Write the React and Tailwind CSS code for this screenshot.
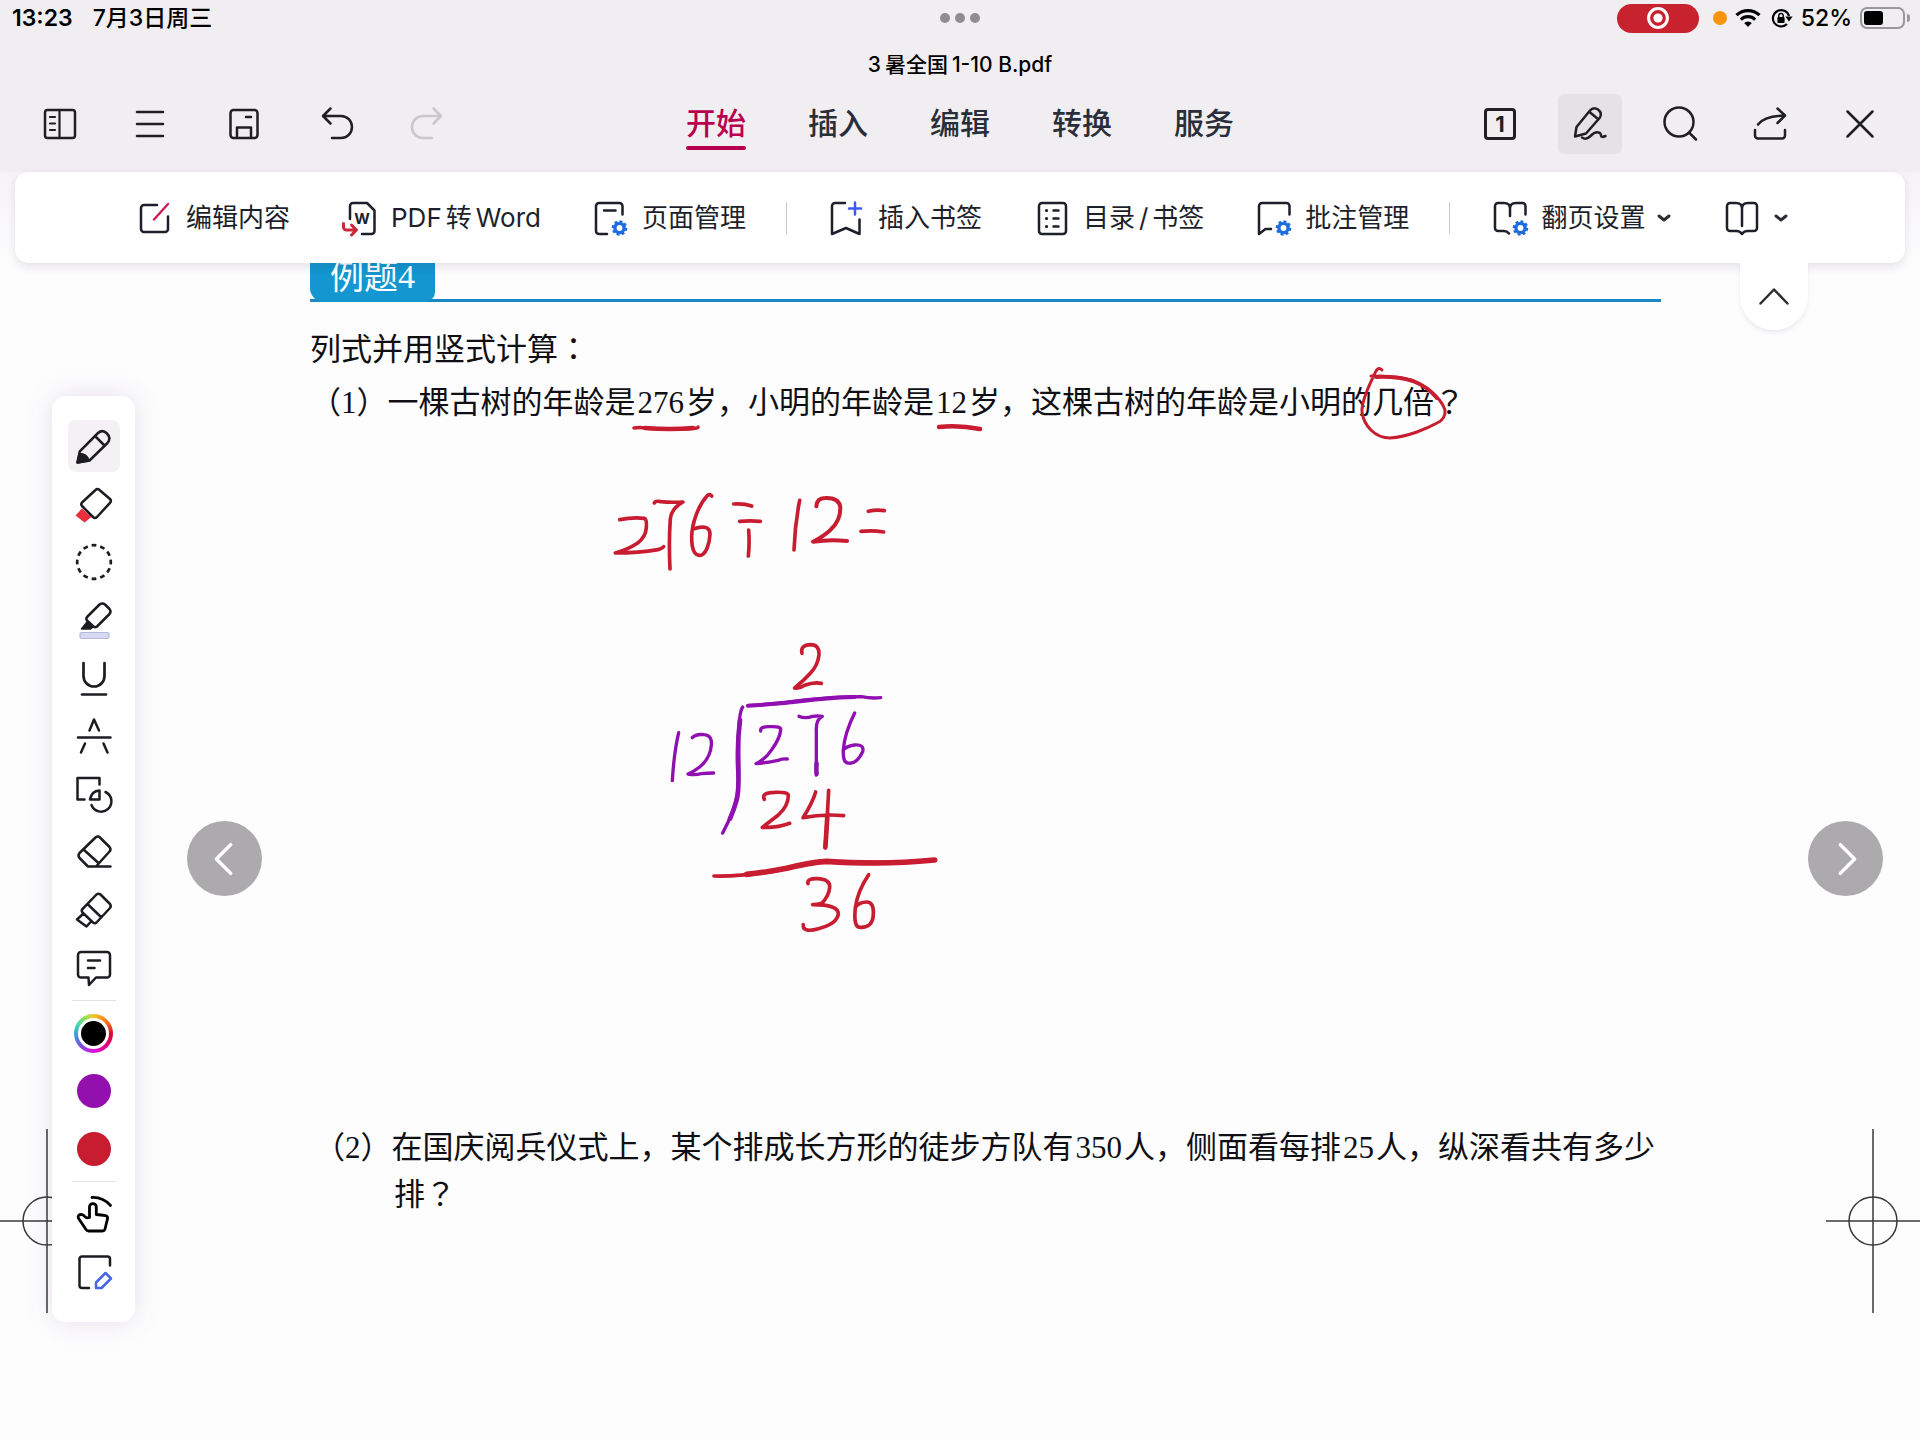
import { useState } from 'react';
import clsx from 'clsx';

const TABS = ['开始', '插入', '编辑', '转换', '服务'];

const INK_RED = '#c81c30';
const INK_PURPLE = '#8f0fb0';

function Icon({ children, className = 'size-10', strokeWidth = 2.5 }) {
  return (
    <svg
      viewBox="0 0 40 40"
      className={clsx('shrink-0', className)}
      fill="none"
      stroke="currentColor"
      strokeWidth={strokeWidth}
      strokeLinecap="round"
      strokeLinejoin="round"
      aria-hidden="true"
    >
      {children}
    </svg>
  );
}

function Gear({ cx, cy }) {
  return (
    <g stroke="#1f6be0" strokeLinecap="butt">
      <circle cx={cx} cy={cy} r="4.6" strokeWidth="3.4" />
      <circle cx={cx} cy={cy} r="6.6" strokeWidth="2.4" pathLength="16" strokeDasharray="1.1 0.9" />
    </g>
  );
}

function Chevron() {
  return (
    <svg viewBox="0 0 16 10" className="h-2.5 w-4 shrink-0" fill="none" stroke="#2c2c34" strokeWidth="3" strokeLinecap="round" strokeLinejoin="round" aria-hidden="true">
      <path d="M3 3l5 4 5-4" />
    </svg>
  );
}

// Mixed Latin and Chinese text, with a little air where the scripts meet
function MixedText({ parts }) {
  return (
    <span className="flex gap-1">
      {parts.map((part) => (
        <span key={part}>{part}</span>
      ))}
    </span>
  );
}

function StatusBar() {
  return (
    <div className="grid h-9 grid-cols-[1fr_auto_1fr] items-center text-[23px] leading-none font-semibold text-black">
      <div className="flex gap-5 pl-3">
        <span>13:23</span>
        <span className="font-medium">7月3日周三</span>
      </div>
      <div className="flex gap-[5px]">
        <span className="size-2.5 rounded-full bg-[#8e8d91]" />
        <span className="size-2.5 rounded-full bg-[#8e8d91]" />
        <span className="size-2.5 rounded-full bg-[#8e8d91]" />
      </div>
      <div className="flex items-center justify-end pr-2.5">
        <span className="mr-3.5 flex h-[29px] w-[82px] items-center justify-center rounded-full bg-[#c9222f]">
          <svg viewBox="0 0 24 24" className="size-6" aria-hidden="true">
            <circle cx="12" cy="12" r="9.4" fill="none" stroke="#fff" strokeWidth="3" />
            <circle cx="12" cy="12" r="4.6" fill="#fff" />
          </svg>
        </span>
        <span className="mr-2 size-3.5 rounded-full bg-[#f8930a]" />
        <svg viewBox="0 0 26 20" className="mr-2.5 h-5 w-[26px]" fill="none" stroke="#000" strokeWidth="3.2" aria-hidden="true">
          <path d="M1.5 7.2a16.5 16.5 0 0 1 23 0" />
          <path d="M5.8 11.6a10.3 10.3 0 0 1 14.4 0" />
          <path d="M13 19l-3.8-4a5.4 5.4 0 0 1 7.6 0z" fill="#000" stroke="none" />
        </svg>
        <svg viewBox="0 0 22 20" className="mr-2 h-5 w-[22px]" aria-hidden="true">
          <path d="M16 16a8.2 8.2 0 1 1 2-8" fill="none" stroke="#000" strokeWidth="2.2" />
          <path d="M14.4 8.6h7.2l-3.6 5z" />
          <rect x="6.4" y="9" width="7.2" height="6" rx="1" />
          <path d="M7.8 9V7.6a2.2 2.2 0 0 1 4.4 0V9" fill="none" stroke="#000" strokeWidth="1.5" />
        </svg>
        <span className="mr-2 font-medium">52%</span>
        <span className="flex h-[22px] w-[45px] items-center rounded-[7px] border-2 border-[#98979b] pl-0.5">
          <span className="h-3.5 w-[19px] rounded-[3px] bg-black" />
        </span>
        <span className="ml-0.5 h-2 w-[3px] rounded-r-full bg-[#98979b]" />
      </div>
    </div>
  );
}

function ToolButton({ label, active, disabled, children }) {
  return (
    <button
      type="button"
      aria-label={label}
      disabled={disabled}
      className={clsx(
        'flex h-[60px] w-16 items-center justify-center rounded-md',
        active && 'bg-[#e4e2e5]',
        disabled ? 'text-[#c9c7ca]' : 'text-[#1f1f24]'
      )}
    >
      {children}
    </button>
  );
}

function MainToolbar({ tab, onTab }) {
  return (
    <div className="grid h-16 grid-cols-[1fr_auto_1fr] items-center">
      <div className="flex gap-7 pl-7">
        <ToolButton label="侧边栏">
          <Icon>
            <rect x="5" y="6" width="30" height="28" rx="2.5" />
            <path d="M19.5 6v28M10 13h5M10 19.5h5M10 26h5" strokeWidth="2.2" />
          </Icon>
        </ToolButton>
        <ToolButton label="菜单">
          <Icon>
            <path d="M5 8h26M5 20h26M5 32h26" />
          </Icon>
        </ToolButton>
        <ToolButton label="保存">
          <Icon>
            <rect x="6.5" y="6" width="27" height="28" rx="3" />
            <path d="M22 13h5M13 33V23.5h14V33" />
          </Icon>
        </ToolButton>
        <ToolButton label="撤销">
          <Icon>
            <path d="M14.5 4.5L7 12l7.5 7.5M7.5 12H25a11 11 0 0 1 0 22h-9" />
          </Icon>
        </ToolButton>
        <ToolButton label="重做" disabled>
          <Icon>
            <path d="M25.5 4.5L33 12l-7.5 7.5M32.500 12H15a11 11 0 0 0 0 22h9" />
          </Icon>
        </ToolButton>
      </div>

      <nav className="flex gap-[62px]">
        {TABS.map((name) => (
          <button
            key={name}
            type="button"
            onClick={() => onTab(name)}
            className={clsx(
              'relative h-16 pb-0.5 text-[30px] leading-none font-medium',
              tab === name ? 'text-[#b8004e]' : 'text-[#2a2e3a]'
            )}
          >
            {name}
            {tab === name && <span className="absolute inset-x-0 bottom-1.5 h-1 rounded-full bg-[#b8004e]" />}
          </button>
        ))}
      </nav>

      <div className="flex justify-end gap-[26px] pr-7">
        <ToolButton label="标签页">
          <span className="flex size-8 items-center justify-center rounded-[4px] border-[3px] border-current text-[22px] leading-none font-bold">
            1
          </span>
        </ToolButton>
        <ToolButton label="批注" active>
          <Icon>
            <path d="M5 32.500l1.500-9.500L20 6.500q3.500-4 8-1 4.500 3.500 2 8L16 29.500zM19.500 8l8.500 7" />
            <path d="M12 33.500q4 3 8.500-1.500t8-3.500q2.500.5 2.500 3t4.500.5" />
          </Icon>
        </ToolButton>
        <ToolButton label="搜索">
          <Icon>
            <circle cx="19" cy="18" r="14.500" />
            <path d="M29.500 29l6.500 6.500" />
          </Icon>
        </ToolButton>
        <ToolButton label="分享">
          <Icon>
            <path d="M8 20.500Q14 12 34.500 11.500M27.500 4.500l7.500 7-7.500 7.500" />
            <path d="M5 26v5.500a3 3 0 0 0 3 3h24a3 3 0 0 0 3-3V26" />
          </Icon>
        </ToolButton>
        <ToolButton label="关闭">
          <Icon>
            <path d="M7.500 7.500l25 25M32.500 7.500l-25 25" />
          </Icon>
        </ToolButton>
      </div>
    </div>
  );
}

function RibbonItem({ icon, label, menu }) {
  return (
    <button
      type="button"
      aria-label={label ? undefined : '阅读模式'}
      className="flex shrink-0 items-center gap-[11px] text-[26px] leading-none whitespace-nowrap text-[#1d1f2b]"
    >
      <Icon>{icon}</Icon>
      {label && <span>{label}</span>}
      {menu && <Chevron />}
    </button>
  );
}

function RibbonDivider() {
  return <span className="-mx-2.5 h-8 w-px shrink-0 bg-[#c9c8cc]" />;
}

function Ribbon() {
  return (
    <div className="relative z-20 mx-[15px] flex h-[91px] items-center gap-[50px] rounded-[14px] bg-white pl-[120px] shadow-[0_4px_10px_rgba(40,30,60,0.12)]">
      <RibbonItem
        label="编辑内容"
        icon={
          <>
            <path d="M22 7H9a3 3 0 0 0-3 3v21a3 3 0 0 0 3 3h21a3 3 0 0 0 3-3V18.500" />
            <path d="M33 6L19 21.500" stroke="#d0205c" />
          </>
        }
      />
      <RibbonItem
        label={<MixedText parts={['PDF', '转', 'Word']} />}
        icon={
          <>
            <path d="M10 21V8a3 3 0 0 1 3-3h14l7.500 7.500V33a3 3 0 0 1-3 3H22" />
            <text x="22" y="25.500" fontSize="15" fontWeight="700" textAnchor="middle" fill="currentColor" stroke="none">
              W
            </text>
            <path d="M3.500 25.500V29a3 3 0 0 0 3 3H16M11.500 27l5 5-5 5" stroke="#c8283a" strokeWidth="3" />
          </>
        }
      />
      <RibbonItem
        label="页面管理"
        icon={
          <>
            <path d="M16 36H8a3 3 0 0 1-3-3V8a3 3 0 0 1 3-3h20.500a3 3 0 0 1 3 3v8.500M13 12.500h11.500" />
            <Gear cx={28.500} cy={30} />
          </>
        }
      />
      <RibbonDivider />
      <RibbonItem
        label="插入书签"
        icon={
          <>
            <path d="M18 5H8a3 3 0 0 0-3 3v28l14-6 13.500 6V21.500" />
            <path d="M28 4.500v12M22 10.500h12" stroke="#3b5bf5" />
          </>
        }
      />
      <RibbonItem
        label={<MixedText parts={['目录', '/', '书签']} />}
        icon={
          <>
            <rect x="7" y="5" width="27" height="31" rx="3" />
            <path d="M14.500 12.500h.1M14.500 20.500h.1M14.500 28.500h.1" strokeWidth="3.200" />
            <path d="M21.500 12.500h5M21.500 20.500h5M21.500 28.500h5" />
          </>
        }
      />
      <RibbonItem
        label="批注管理"
        icon={
          <>
            <path d="M17 31h-5.500L5 36V8a3 3 0 0 1 3-3h24.500a3 3 0 0 1 3 3v8.500" />
            <Gear cx={29.500} cy={30} />
          </>
        }
      />
      <RibbonDivider />
      <RibbonItem
        label="翻页设置"
        menu
        icon={
          <>
            <path d="M19 35.500q-2-2.500-5-2.500H8a3 3 0 0 1-3-3V8a3 3 0 0 1 3-3h6q6 0 6 5.500V18M20 10.500Q20 5 26 5h6.500a3 3 0 0 1 3 3v8.500" />
            <Gear cx={30.500} cy={30} />
          </>
        }
      />
      <RibbonItem
        menu
        icon={
          <path d="M20 28V10.500Q20 5 14 5H8a3 3 0 0 0-3 3v22a3 3 0 0 0 3 3h6.500q3.500 0 5.500 3 2-3 5.500-3H32a3 3 0 0 0 3-3V8a3 3 0 0 0-3-3h-6q-6 0-6 5.500" />
        }
      />
      <button
        type="button"
        aria-label="收起工具栏"
        className="absolute top-full right-[97px] flex h-[67px] w-[68px] items-center justify-center rounded-b-full bg-white text-[#2c2c34] shadow-[0_3px_4px_rgba(40,30,60,0.08)]"
      >
        <Icon>
          <path d="M6.500 26.500L20 12.500l13.500 14" />
        </Icon>
      </button>
    </div>
  );
}

const PEN_TOOLS = [
  {
    label: '铅笔',
    icon: (
      <>
        <path d="M3.500 36.500l2.300-11.200L24 7q4.500-4 9 .5t.5 9.500L15.500 34.500zM21.500 10.500l8.500 8.500" />
        <path d="M3.500 36.500l2-8.500q7 0 9 6.500z" fill="currentColor" />
      </>
    ),
  },
  {
    label: '马克笔',
    icon: (
      <>
        <path d="M8 24.500L1.500 31.500l9 7 7-5.500z" fill="#e8303c" stroke="none" />
        <path d="M21.500 6q2-2 4 0L36 15q1.800 1.800 0 3.800L23 33q-2 2-4 0L8 22q-1.500-1.700 0-3.500z" fill="#fff" />
      </>
    ),
  },
  {
    label: '套索',
    icon: <circle cx="20" cy="20" r="16.800" strokeWidth="2.700" strokeLinecap="butt" pathLength="120" strokeDasharray="5.500 4.500" strokeDashoffset="2.750" />,
  },
  {
    label: '荧光笔',
    icon: (
      <>
        <path d="M25.500 4.500q3-2 5.500 0l4.500 4.500q2 2.500 0 5L23 26.500q-2 1.500-3.500 0L13 20.500q-1.300-1.800 0-3.500z" />
        <path d="M7.500 29l5.500-7 6 5-2.500 2z" fill="currentColor" strokeWidth="1.500" />
        <rect x="6" y="32.500" width="29" height="6" rx="1.500" fill="#d6d9f2" stroke="#b5b9dc" strokeWidth="1.200" />
      </>
    ),
  },
  { label: '下划线', icon: <path d="M9.500 5v13a10.500 10.500 0 0 0 21 0V5M8 36.500h24" strokeWidth="2.700" /> },
  { label: '删除线', icon: <path d="M15.500 14.500l4.500-11 5 11M4 21.500h32.500M11 27.500l-4 9M29.500 27.500l4 9" /> },
  {
    label: '形状',
    icon: (
      <>
        <path d="M10.500 25.500H3.500V4h22v6.500" />
        <path d="M31.500 18A10.300 10.300 0 1 1 17.500 31M16 25.500h9.500V16.500q-8 .5-9.500 9z" />
      </>
    ),
  },
  { label: '橡皮擦', icon: <path d="M14 34.500L5.500 26q-2-2.500 0-5L21.500 5.500q2.500-2 4.500 0L35.500 15q2 2.500 0 4.500L22 34.500M9.500 17.500l15.500 14M14 34.500h22.500" /> },
  { label: '记号笔', icon: <path d="M22.500 4.500q2-1.500 4 0l9.500 9.500q1.500 2 0 4L22.500 32.500q-1.500 1.500-3.500 0L8.500 22.500q-1.500-2 0-3.500zM14 14.500l13.500 13M9.500 23.500l-6.500 6 9.500 7 5-5.500" /> },
  {
    label: '注释',
    icon: (
      <>
        <path d="M7 4h26a3 3 0 0 1 3 3v19.500a3 3 0 0 1-3 3H22L15 37l-.5-7.500H7a3 3 0 0 1-3-3V7a3 3 0 0 1 3-3z" />
        <path d="M14 12.500h12M14 20h6.500" />
      </>
    ),
  },
];

function PenPalette() {
  const [tool, setTool] = useState('铅笔');

  return (
    <aside className="absolute top-[133px] left-[52px] z-10 flex w-[83px] flex-col items-center rounded-[14px] bg-white py-6 text-[#1c1c22] shadow-[0_0_28px_rgba(60,40,90,0.14)]">
      <div className="flex flex-col gap-1.5">
        {PEN_TOOLS.map(({ label, icon }) => (
          <button
            key={label}
            type="button"
            aria-label={label}
            aria-pressed={tool === label}
            onClick={() => setTool(label)}
            className={clsx('flex size-[52px] items-center justify-center rounded-lg', tool === label && 'bg-[#f3f1f4]')}
          >
            <Icon>{icon}</Icon>
          </button>
        ))}
      </div>
      <span className="my-1.5 h-px w-11 bg-[#e2e1e4]" />
      <div className="flex flex-col gap-1.5">
        <button type="button" aria-label="自定义颜色" className="flex size-[52px] items-center justify-center">
          <span className="flex size-[39px] items-center justify-center rounded-full bg-[conic-gradient(#f5c62a,#f56a1e_55deg,#d9082c_90deg,#e8007a_130deg,#e010e0_180deg,#7a50d8_225deg,#3f9ad8_265deg,#3fdcb0_300deg,#a8e040_340deg,#f5c62a)]">
            <span className="size-[31px] rounded-full border-[3px] border-white bg-black" />
          </span>
        </button>
        <button type="button" aria-label="紫色" className="flex size-[52px] items-center justify-center">
          <span className="size-[34px] rounded-full bg-[#9410ae]" />
        </button>
        <button type="button" aria-label="红色" className="flex size-[52px] items-center justify-center">
          <span className="size-[34px] rounded-full bg-[#c81c30]" />
        </button>
      </div>
      <span className="my-1.5 h-px w-11 bg-[#e2e1e4]" />
      <div className="flex flex-col gap-1.5">
        <button type="button" aria-label="手指书写" className="flex size-[52px] items-center justify-center text-black">
          <Icon strokeWidth={2.8}>
            <path d="M18 3.500Q29 3 36.500 11.500" />
            <path d="M15.500 23.500V13a3.400 3.400 0 0 1 6.800 0v7.500l9 1q2.500.5 2.300 3L31 35q-.5 2-2.500 2H14.500q-1.500 0-2.500-1.500L4.300 24q-.8-3.500 3-3.500 2 0 3.500 2t4.700 1" />
          </Icon>
        </button>
        <button type="button" aria-label="编辑页面" className="flex size-[52px] items-center justify-center">
          <Icon>
            <path d="M15 36H8a2.500 2.500 0 0 1-2.500-2.500V7A2.500 2.500 0 0 1 8 4.500h25.500A2.500 2.500 0 0 1 36 7v6.500" />
            <path d="M22 36v-5.500l9.500-9.500 5.500 5.500-9.500 9.500z" stroke="#4565ea" />
          </Icon>
        </button>
      </div>
    </aside>
  );
}

function PageArrow({ label, className, d }) {
  return (
    <button type="button" aria-label={label} className={clsx('absolute top-[558px] z-10 flex size-[75px] items-center justify-center rounded-full bg-[#acaaad] text-white', className)}>
      <Icon className="size-[46px]" strokeWidth={3}>
        <path d={d} />
      </Icon>
    </button>
  );
}

function CropMark({ className }) {
  return (
    <svg viewBox="-47 -92 94 184" className={clsx('absolute top-[866px] h-[184px] w-[94px]', className)} fill="none" stroke="#3a3a3d" strokeWidth="1.5" aria-hidden="true">
      <path d="M0-92V92M-47 0H47" />
      <circle r="24" />
    </svg>
  );
}

// Pen strokes, in page coordinates. The worked sums are drawn at three times
// their size and scaled down, which keeps the curve points whole.
function Ink() {
  return (
    <svg
      viewBox="0 263 1920 1177"
      className="pointer-events-none absolute top-0 left-0 h-[1177px] w-[1920px] max-w-none"
      fill="none"
      strokeLinecap="round"
      strokeLinejoin="round"
      role="img"
      aria-label="手写演算 276÷12"
    >
      <g stroke={INK_RED} strokeWidth="3.500">
        <path d="M634 428q5-1 12 0t30 1 22-2" />
        <path d="M645 428q25 2 48 0" strokeWidth="4.500" />
        <path d="M939 427q20-2 41 2" strokeWidth="4.500" />
        <path d="M1382 370q-4-4-7 3c-3 7-14 27-13 39 2 14 13 26 28 26 18-1 38-10 47-15q9-4 8-13-3-10-17-21-17-12-36-12-11-1-21-1" strokeWidth="3" />
        <path d="M1376 377q20-1 37 4 15 6 24 17" strokeWidth="4" />
      </g>

      <g transform="translate(580 470) scale(0.33333)">
        <g stroke={INK_RED} strokeWidth="11">
          <path d="M119 149q40-8 74-4 8 3 6 28-2 28-26 46-30 20-67 30 70 0 128-10 14-4 17-9" />
          <path d="M223 99q2-7 20-4 30 3 66 1-34 18-38 50-5 70-1 151" />
          <path d="M395 78q-7-8-14 0c-26 28-46 84-46 124 0 42 10 54 24 54 18 0 30-34 31-64 0-24-26-24-48-16" />
          <path d="M461 102q32-2 54 6M479 154q32-3 62 0M506 180q3 40-1 78" />
          <path d="M659 91q-14 70-17 149" />
          <path d="M709 109q2-25 26-25 44-2 46 30 0 38-28 64-20 20-54 37 52-8 102-2" strokeWidth="12" />
          <path d="M865 124q24-6 48-2M843 184q36-4 68 2" />

          <path d="M666 550q-6-25 26-26 26 0 25 30-3 32-26 56-20 22-47 44 14 3 30-8 26-10 50-6" />
          <path d="M553 988q-10-20 30-21 42-2 42 10 0 30-30 58l-48 37q46 2 82-12" />
          <path d="M707 966q-10 34-38 77 60-12 122-6M746 961q-4 80-10 172" />
          <path d="M742 1040q-3 50-6 92" strokeWidth="14" />
          <path d="M402 1218q90 2 200-18 80-26 140-27 80 4 140 4 80 2 184-7" />
          <path d="M500 1213q60-6 120-18 70-18 120-21 70 5 150 5 80 0 174-9" strokeWidth="17" />
          <path d="M684 1241q-4-16 28-15 40 2 37 26-2 26-24 48-12 4-27 4 78 0 77 28-4 30-60 44-34 10-44-2-2-6-1-10" />
          <path d="M866 1214q-34 50-40 100-6 58 14 58 38 2 40-38 2-38-20-38-22 0-34 16" />
        </g>
        <g stroke={INK_PURPLE} strokeWidth="10">
          <path d="M504 707q80-4 170-17 90-10 170-10 30 6 58 3" />
          <path d="M504 707q80-4 170-15 60-8 150-11" strokeWidth="12" />
          <path d="M488 711q-14 20-12 130 2 90-4 130-8 50-44 118" />
          <path d="M480 750q-8 60-6 130 4 80-4 110-8 30-20 56" strokeWidth="14" />
          <path d="M296 788q-14 60-19 144" />
          <path d="M337 803q10-12 36-9 24 2 21 32-4 40-36 66-18 14-34 20 20 4 40-1 18-2 37-2" />
          <path d="M542 783q-2-14 28-13 34-2 32 10-2 24-26 58-20 30-48 43 40-4 66-10 14-5 28-4" />
          <path d="M657 739q20 8 40 0 16-2 30 0-20 10-18 44l0 90q-2 20 0 42" />
          <path d="M710 880q-1 16 0 32" strokeWidth="13" />
          <path d="M824 729q-30 60-34 110-2 40 14 40 24 6 44-34 6-22-24-20-22 3-34 14" />
        </g>
      </g>
    </svg>
  );
}

function Num({ children }) {
  return <span className="mx-0.5 font-['Liberation_Serif',serif] leading-none">{children}</span>;
}

// The Japanese face centres the colon and question mark in their cell
function Mark({ children }) {
  return <span className="font-['Noto_Sans_CJK_JP',sans-serif] leading-none">{children}</span>;
}

function Worksheet() {
  return (
    <article className="pr-[259px] pl-[310px] text-[31px] whitespace-nowrap text-[#101014]">
      <header className="h-[39px] border-b-[3px] border-[#1b87c4]">
        <h1 className="flex h-[39px] w-[125px] items-center justify-center rounded-br-[10px] rounded-bl-[14px] bg-[#1496d0] pb-3 text-[34px] leading-none font-normal text-white">
          例题<span className="font-['Liberation_Serif',serif]">4</span>
        </h1>
      </header>
      <p className="mt-5 leading-[53px]">
        列式并用竖式计算<Mark>：</Mark>
      </p>
      <p className="leading-[53px]">
        （<span className="font-['Liberation_Serif',serif] leading-none">1</span>）一棵古树的年龄是<Num>276</Num>岁，小明的年龄是<Num>12</Num>岁，这棵古树的年龄是小明的几倍<Mark>？</Mark>
      </p>
      <p className="mt-[695px] ml-1 pl-20 -indent-20 leading-[47px]">
        （<span className="font-['Liberation_Serif',serif] leading-none">2</span>）在国庆阅兵仪式上，某个排成长方形的徒步方队有<Num>350</Num>人，侧面看每排<Num>25</Num>人，纵深看共有多少
        <br />
        排<Mark>？</Mark>
      </p>
    </article>
  );
}

export default function App() {
  const [tab, setTab] = useState('开始');

  return (
    <div className="flex min-h-screen flex-col overflow-hidden bg-[#fefdfe] font-['Inter','Noto_Sans_CJK_SC',sans-serif]">
      <div className="bg-[#f0eef1] pb-4">
        <StatusBar />
        <div className="flex h-14 items-center justify-center text-[21px] leading-none font-medium text-black">
          <MixedText parts={['3', '暑全国', '1-10 B.pdf']} />
        </div>
        <MainToolbar tab={tab} onTab={setTab} />
      </div>
      <div className="bg-linear-to-b from-[#f5f3f6] to-[#fefdfe]">
        <Ribbon />
      </div>
      <main className="relative flex-1 overflow-hidden">
        <CropMark className="left-0" />
        <CropMark className="right-0" />
        <Worksheet />
        <Ink />
        <PenPalette />
        <PageArrow label="上一页" className="left-[187px]" d="M25 7.500L12.500 20 25 32.500" />
        <PageArrow label="下一页" className="right-[37px]" d="M15 7.500L27.500 20 15 32.500" />
      </main>
    </div>
  );
}
